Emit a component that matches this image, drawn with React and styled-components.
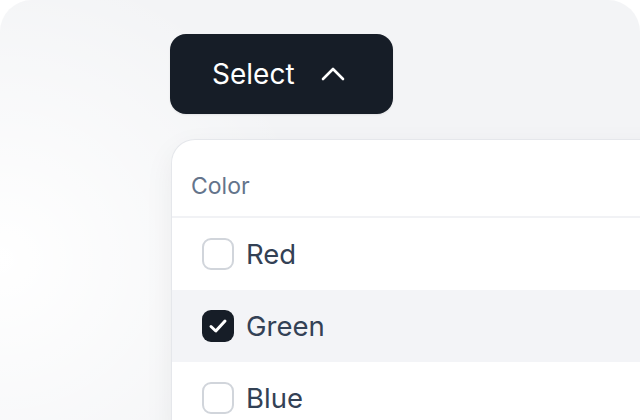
import React from 'react';
import styled, { createGlobalStyle } from 'styled-components';

const Global = createGlobalStyle`
  html, body { margin: 0; padding: 0; background: #ffffff; }
  body { font-family: Inter, "Noto Sans", sans-serif; -webkit-font-smoothing: antialiased; }
  * { box-sizing: border-box; }
`;

const Stage = styled.div`
  width: 640px;
  height: 420px;
  overflow: hidden;
  border-radius: 32px 32px 0 0;
  background:
    radial-gradient(ellipse 320px 300px at 0px 260px, #ffffff 0%, rgba(255,255,255,0) 100%),
    #f3f4f6;
  padding: 34px 0 0 170px;
  display: flex;
  flex-direction: column;
  align-items: flex-start;
  gap: 25px;
  & > * { flex-shrink: 0; }
`;

const Trigger = styled.button`
  display: flex;
  align-items: center;
  gap: 26px;
  height: 80px;
  padding: 0 48px 0 42px;
  border: none;
  border-radius: 16px;
  background: #161d27;
  color: #ffffff;
  font-family: inherit;
  font-size: 28px;
  font-weight: 400;
  box-shadow: 0 1px 2px rgba(0,0,0,0.08);
`;

const Panel = styled.div`
  width: 520px;
  margin-left: 1px;
  background: #ffffff;
  border: 1px solid #e5e7eb;
  border-right: none;
  border-bottom: none;
  border-radius: 24px 0 0 0;
  box-shadow: 0 10px 30px rgba(17,24,39,0.06);
`;

const Header = styled.div`
  height: 78px;
  display: flex;
  align-items: center;
  padding-left: 19px;
  padding-top: 16px;
  font-size: 23px;
  color: #64748b;
  border-bottom: 2px solid #f1f2f5;
`;

const Row = styled.div`
  height: 72px;
  display: flex;
  align-items: center;
  gap: 12px;
  padding-left: 30px;
  background: ${p => (p.$active ? '#f3f4f7' : '#ffffff')};
  font-size: 27.5px;
  color: #334155;
`;

const Box = styled.span`
  width: 32px;
  height: 32px;
  border-radius: 9px;
  display: flex;
  align-items: center;
  justify-content: center;
  border: ${p => (p.$checked ? 'none' : '2.5px solid #d1d5db')};
  background: ${p => (p.$checked ? '#161d27' : '#ffffff')};
`;

const options = [
  { label: 'Red', checked: false },
  { label: 'Green', checked: true },
  { label: 'Blue', checked: false },
];

export default function App() {
  return (
    <>
      <Global />
      <Stage>
        <Trigger>
          Select
          <svg width="24" height="14" viewBox="0 0 24 14" fill="none">
            <path d="M2 12 L12 2 L22 12" stroke="#fff" strokeWidth="2.6" strokeLinecap="round" strokeLinejoin="round" />
          </svg>
        </Trigger>
        <Panel>
          <Header>Color</Header>
          {options.map(o => (
            <Row key={o.label} $active={o.checked}>
              <Box $checked={o.checked}>
                {o.checked && (
                  <svg width="32" height="32" viewBox="0 0 32 32" fill="none">
                    <path d="M9 16.5 L13.8 21 L23 11" stroke="#fff" strokeWidth="3" strokeLinecap="round" strokeLinejoin="round" />
                  </svg>
                )}
              </Box>
              {o.label}
            </Row>
          ))}
        </Panel>
      </Stage>
    </>
  );
}
